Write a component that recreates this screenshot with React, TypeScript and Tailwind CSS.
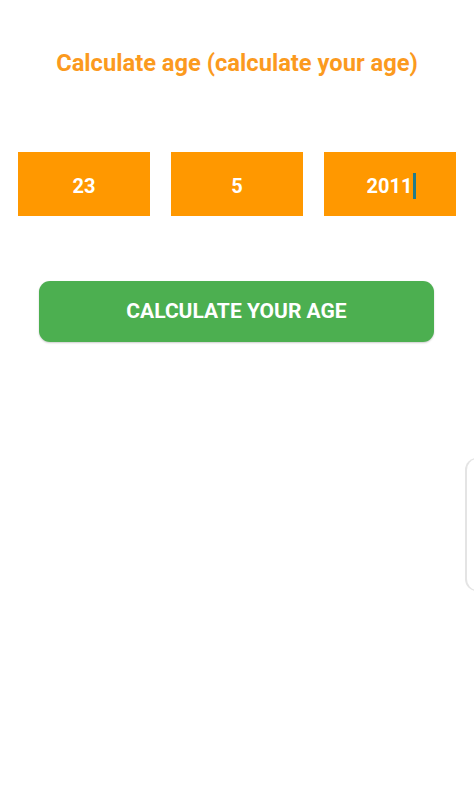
import React from "react";

export default function App() {
  return (
    <div
      className="relative w-[474px] h-[808px] bg-white overflow-hidden"
      style={{ fontFamily: "Roboto, 'Noto Sans', sans-serif" }}
    >
      {/* Title */}
      <h1 className="pt-[49px] text-center text-[23.7px] font-bold leading-[28px] text-[#fb9a1e]">
        Calculate age (calculate your age)
      </h1>

      {/* Date inputs */}
      <div className="mt-[75px] px-[18px] grid grid-cols-3 gap-[21px]">
        <div className="h-[64px] pt-[3px] bg-[#ff9800] flex items-center justify-center text-white text-[20px] font-bold">
          23
        </div>
        <div className="h-[64px] pt-[3px] bg-[#ff9800] flex items-center justify-center text-white text-[20px] font-bold">
          5
        </div>
        <div className="h-[64px] pt-[3px] bg-[#ff9800] flex items-center justify-center text-white text-[20px] font-bold">
          <span className="pl-[3px]">2011</span>
          <span className="ml-[1px] w-[3px] h-[26px] bg-[#227b8a]" />
        </div>
      </div>

      {/* Button */}
      <div className="mt-[65px] px-[39px] pr-[40px]">
        <button className="w-full h-[61px] rounded-[11px] bg-[#4caf50] text-white text-[21px] font-bold uppercase shadow-[0_1px_2px_rgba(0,0,0,0.2)]">
          Calculate your age
        </button>
      </div>

      {/* Edge handle overlay */}
      <div className="absolute left-[465px] top-[458px] w-[20px] h-[133px] rounded-l-[12px] border-l-2 border-t border-b border-[#e4e4e4]" />
    </div>
  );
}
